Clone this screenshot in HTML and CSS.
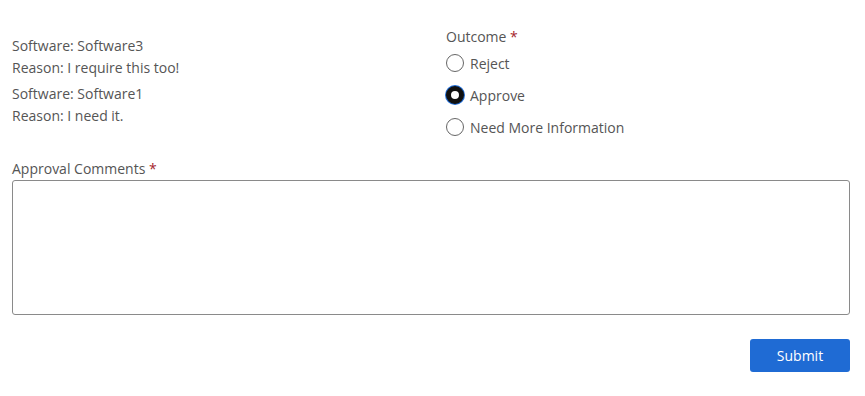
FILE: index.html
```html
<!DOCTYPE html>
<html>
  <head>
    <meta charset="utf-8">
    <title>Approval</title>
    <link rel="stylesheet" href="styles.css">
  </head>
  <body>
    <form class="form">
      <div class="top">
        <div class="requests">
          <div class="request">
            <div>Software: Software3</div>
            <div>Reason: I require this too!</div>
          </div>
          <div class="request">
            <div>Software: Software1</div>
            <div>Reason: I need it.</div>
          </div>
        </div>
        <div class="outcome">
          <div class="label outcome-label">Outcome <span class="req">*</span></div>
          <label class="radio"><input type="radio" name="outcome"><span class="dot"></span>Reject</label>
          <label class="radio"><input type="radio" name="outcome" checked><span class="dot"></span>Approve</label>
          <label class="radio"><input type="radio" name="outcome"><span class="dot"></span>Need More Information</label>
        </div>
      </div>
      <div class="label comments-label">Approval Comments <span class="req">*</span></div>
      <textarea class="comments"></textarea>
      <div class="actions">
        <button type="button" class="submit">Submit</button>
      </div>
    </form>
  </body>
</html>
```

FILE: styles.css
```css
body {
  margin: 0;
  background: #fff;
  font-family: "Open Sans", "Noto Sans", sans-serif;
  font-size: 14px;
  color: #555;
}
.form {
  padding: 26px 15px 0 12px;
}
.top {
  display: grid;
  grid-template-columns: 434px 1fr;
}
.requests {
  padding-top: 9px;
}
.request {
  line-height: 22px;
  margin-bottom: 4px;
}
.label {
  line-height: 22px;
}
.outcome-label {
  margin-bottom: -1px;
}
.req {
  color: #a4262c;
}
.radio {
  display: flex;
  align-items: center;
  height: 32px;
  cursor: pointer;
}
.radio input {
  display: none;
}
.dot {
  width: 16px;
  height: 16px;
  border: 1px solid #666;
  border-radius: 50%;
  margin-right: 6px;
  box-sizing: content-box;
}
.radio input:checked + .dot {
  width: 12px;
  height: 12px;
  border: 3px solid #111;
  background: #fff;
  box-shadow: 0 0 0 1px #1f6bd4;
  position: relative;
}
.radio input:checked + .dot::after {
  content: "";
  position: absolute;
  inset: 0;
  border-radius: 50%;
  border: 3px solid #111;
  margin: -1px;
}
.comments-label {
  margin-top: 15px;
}
.comments {
  display: block;
  width: 838px;
  height: 135px;
  box-sizing: border-box;
  border: 1px solid #8a8a8a;
  border-radius: 3px;
  resize: none;
  margin: 0;
}
.actions {
  display: flex;
  justify-content: flex-end;
  width: 838px;
  margin-top: 24px;
}
.submit {
  width: 100px;
  height: 33px;
  border: none;
  border-radius: 3px;
  background: #1f6bd4;
  color: #fff;
  font-family: inherit;
  font-size: 14px;
}
```
